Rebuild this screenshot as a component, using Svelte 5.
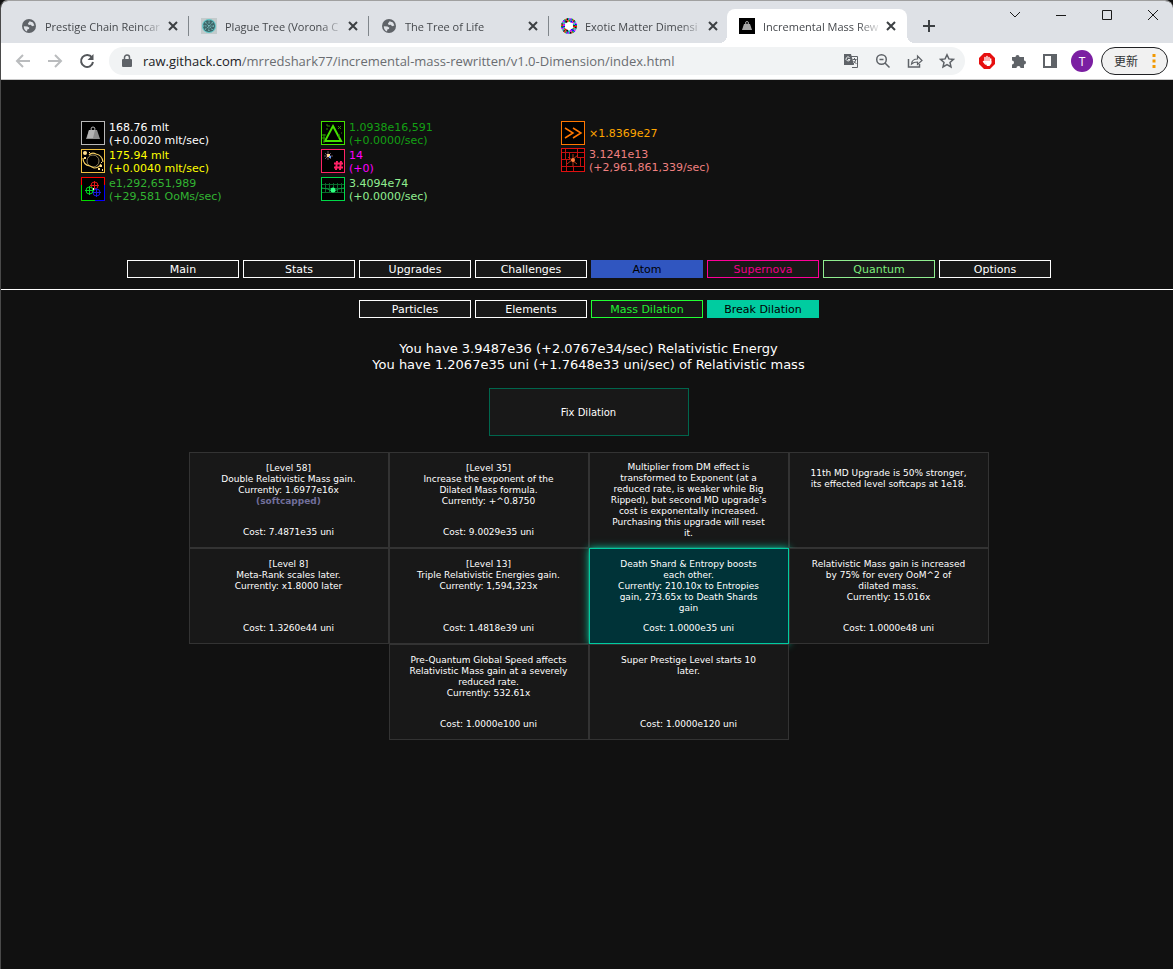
<script lang="ts">
  const tabs = [
    { icon: "globe", title: "Prestige Chain Reincar" },
    { icon: "plague", title: "Plague Tree (Vorona C" },
    { icon: "globe", title: "The Tree of Life" },
    { icon: "exotic", title: "Exotic Matter Dimensi" },
    { icon: "mass", title: "Incremental Mass Rew", active: true },
  ];

  const resources = [
    [
      { icon: "weight", color: "#ffffff", border: "#b8b8b8", amount: "168.76 mlt", rate: "(+0.0020 mlt/sec)" },
      { icon: "hole", color: "#ffff00", border: "#f0c040", amount: "175.94 mlt", rate: "(+0.0040 mlt/sec)" },
      { icon: "quarks", color: "#32b432", border: "#ff0000", amount: "e1,292,651,989", rate: "(+29,581 OoMs/sec)" },
    ],
    [
      { icon: "triangle", color: "#14a014", border: "#44e000", amount: "1.0938e16,591", rate: "(+0.0000/sec)" },
      { icon: "hash", color: "#ff00ff", border: "#ff2266", amount: "14", rate: "(+0)" },
      { icon: "grid", color: "#90ee90", border: "#00d848", amount: "3.4094e74", rate: "(+0.0000/sec)" },
    ],
    [
      { icon: "arrows", color: "#ffa500", border: "#ff7700", amount: "×1.8369e27", rate: "" },
      { icon: "crack", color: "#f08080", border: "#e01010", amount: "3.1241e13", rate: "(+2,961,861,339/sec)" },
    ],
  ];

  const mainTabs = [
    { name: "Main", style: "" },
    { name: "Stats", style: "" },
    { name: "Upgrades", style: "" },
    { name: "Challenges", style: "" },
    { name: "Atom", style: "atom" },
    { name: "Supernova", style: "supernova" },
    { name: "Quantum", style: "quantum" },
    { name: "Options", style: "" },
  ];

  const subTabs = [
    { name: "Particles", style: "" },
    { name: "Elements", style: "" },
    { name: "Mass Dilation", style: "dilation" },
    { name: "Break Dilation", style: "broken" },
  ];

  const upgrades = [
    [
      { level: "[Level 58]", desc: "Double Relativistic Mass gain.", effect: "Currently: 1.6977e16x", softcapped: true, cost: "7.4871e35" },
      { level: "[Level 35]", desc: "Increase the exponent of the Dilated Mass formula.", effect: "Currently: +^0.8750", cost: "9.0029e35" },
      { desc: "Multiplier from DM effect is transformed to Exponent (at a reduced rate, is weaker while Big Ripped), but second MD upgrade's cost is exponentally increased. Purchasing this upgrade will reset it." },
      { desc: "11th MD Upgrade is 50% stronger, its effected level softcaps at 1e18." },
    ],
    [
      { level: "[Level 8]", desc: "Meta-Rank scales later.", effect: "Currently: x1.8000 later", cost: "1.3260e44" },
      { level: "[Level 13]", desc: "Triple Relativistic Energies gain.", effect: "Currently: 1,594,323x", cost: "1.4818e39" },
      { desc: "Death Shard & Entropy boosts each other.", effect: "Currently: 210.10x to Entropies gain, 273.65x to Death Shards gain", cost: "1.0000e35", can: true },
      { desc: "Relativistic Mass gain is increased by 75% for every OoM^2 of dilated mass.", effect: "Currently: 15.016x", cost: "1.0000e48" },
    ],
    [
      { desc: "Pre-Quantum Global Speed affects Relativistic Mass gain at a severely reduced rate.", effect: "Currently: 532.61x", cost: "1.0000e100" },
      { desc: "Super Prestige Level starts 10 later.", cost: "1.0000e120" },
    ],
  ];

  const exoticColors = ["#ff0000", "#00b000", "#0000ff", "#e000e0", "#00b8b8", "#101010"];
</script>

{#snippet favicon(icon)}
  {#if icon === "globe"}
    <svg class="favicon" viewBox="0 0 16 16">
      <circle cx="8" cy="8" r="7" fill="#5f6368" />
      <path d="M8.6 3.2 12 4.4l1.4 3-2.2.9-1.5-1.6-1.9.3-.9-1.6 1-1.1zM2.8 8.2l3.7.2 1.9 1.3-.5 1.4-1.6.4-.3 2C4 12.700 2.700 10.600 2.800 8.200z" fill="#dee1e6" />
    </svg>
  {:else if icon === "plague"}
    <svg class="favicon" viewBox="0 0 16 16">
      <rect width="16" height="16" fill="#c3cbcc" />
      <circle cx="8" cy="8" r="7" fill="#5cc4c5" />
      <circle cx="8" cy="8" r="6" fill="#3e6668" />
      <path d="M8 2v12M2 8h12M4 4l8 8M12 4l-8 8" stroke="#7fc8c8" stroke-dasharray="1 1.500" />
      <circle cx="8" cy="8" r="4" fill="none" stroke="#7fc8c8" stroke-dasharray="1 2" />
    </svg>
  {:else if icon === "exotic"}
    <svg class="favicon" viewBox="0 0 16 16">
      <circle cx="8" cy="8" r="8" fill="#fff" />
      {#each exoticColors as color, i}
        <circle cx="8" cy="8" r="7" fill="none" stroke={color} stroke-width="2" stroke-dasharray="1.220 6.110" stroke-dashoffset={i * 1.22} />
        <circle cx="8" cy="8" r="5" fill="none" stroke={color} stroke-width="2" stroke-dasharray="1.740 8.730" stroke-dashoffset={-i * 1.74} />
      {/each}
      <path d="m8 3 1.400 2.500 3-.5-1.200 2.800 1.600 2.400-3 .3L8 13l-1.800-2.500-3-.3 1.600-2.400L3.600 5l3 .5z" fill="#fff" />
    </svg>
  {:else}
    <svg class="favicon" viewBox="0 0 16 16">
      <rect width="16" height="16" fill="#000" />
      <path d="M5 6h6l2 6H3z" fill="#a8a8a8" />
      <circle cx="8" cy="5" r="1.500" fill="none" stroke="#a8a8a8" />
    </svg>
  {/if}
{/snippet}

{#snippet resourceIcon(icon, border)}
  <svg class="res-icon" viewBox="0 0 24 24" fill="none">
    <rect x="0.5" y="0.5" width="23" height="23" fill="#000" stroke={border} />
    {#if icon === "weight"}
      <path d="M8 9h8l3 9H5z" fill="#8c8c8c" />
      <path d="M8 9h6l-2 8H6z" fill="#b4b4b4" />
      <circle cx="12" cy="8" r="2" stroke="#b4b4b4" />
    {:else if icon === "hole"}
      <circle cx="12" cy="12" r="6" stroke="#8a7d5a" stroke-width="1" />
      <path d="M2 9q0 7 7 8l4 2q5 0 7-4M8 6q3-3 7-1 6 1 7 8" stroke="#f5cf62" stroke-width="1.200" />
      <circle cx="4" cy="4" r="2" fill="#ffe090" />
      <path d="M8 3h1v1H8zM3 8h2v2H3zM19 16h2v2h-2zM17 19h2v2h-2zM21 20h1v2h-1zM20 13h1v1h-1z" fill="#ffe090" />
    {:else if icon === "quarks"}
      <path d="M0.500 8V23.500H14" stroke="#00dc00" />
      <path d="M14 23.500H23.500V8" stroke="#0000ff" />
      <circle cx="13.500" cy="8.500" r="3.500" stroke="#e01818" />
      <path d="M13.500 4v9M9 8.500h9" stroke="#e01818" />
      <circle cx="15.500" cy="15.500" r="3.500" stroke="#1818e0" />
      <path d="M15.500 11v9M11 15.500h9" stroke="#1818e0" />
      <circle cx="8.500" cy="13.500" r="3.500" stroke="#00d820" />
      <path d="M8.500 9v9M4 13.500h9" stroke="#00d820" />
      <path d="M12 11h1v2h-1z" fill="#ffffff" />
    {:else if icon === "triangle"}
      <path d="M12 5 20 20H4z" stroke="#44e000" stroke-width="2" />
      <path d="M1 14h4M1 17h3M3 13v9M18 13v4M6 5h3M5 8h2M17 5l3 3M20 5l-3 3M6 3v2M20 12h1" stroke="#2a9000" />
    {:else if icon === "hash"}
      <path d="M16 12l-1 9M20 12l-1 9M13 14.500h9M13 18.500h9" stroke="#ff2266" stroke-width="2" />
      <path d="M7 2v9M3 7h9M4 4l6 6M10 4l-6 6" stroke="#665060" />
      <path d="M6 5h3v3H6z" fill="#ffd890" />
      <path d="M8 7h2v2H8z" fill="#60a0ff" />
    {:else if icon === "grid"}
      <path d="M1 7.500h22M1 11.500h22M1 15.500h22M4.500 6v10M8.500 6v10M12.500 6v10M16.500 6v10M20.500 6v10" stroke="#0a6a2c" />
      <path d="M1 11q6 0 11 4q5-4 11-4" stroke="#0a9a40" />
      <circle cx="12" cy="13" r="2.500" fill="#30ff80" />
    {:else if icon === "arrows"}
      <path d="M4 7l8 5-8 5M12 7l8 5-8 5" stroke="#ff7700" stroke-width="1.500" />
    {:else}
      <path d="M1 4.500h22M1 11.500h7M16 9.500h7M1 18.500h22M4.500 1v10M8.500 4v8M16.500 1v9M5.500 12v11M12.500 18v5M19.500 10v9" stroke="#c01010" />
      <path d="M12 6v12M6 16l11-9M7 9l9 7" stroke="#b83818" />
      <circle cx="12" cy="12" r="2" fill="#ff8040" />
    {/if}
  </svg>
{/snippet}

<div class="window">
  <header class="tab-strip">
    <div class="tabs">
      {#each tabs as tab}
        <div class="tab" class:active={tab.active}>
          {@render favicon(tab.icon)}
          <span class="tab-title">{tab.title}</span>
          <button class="tab-close" aria-label="Close tab">
            <svg width="10" height="10" viewBox="0 0 10 10"><path d="M1 1l8 8M9 1 1 9" /></svg>
          </button>
        </div>
      {/each}
      <button class="new-tab" aria-label="New tab">
        <svg width="14" height="14" viewBox="0 0 14 14"><path d="M7 1v12M1 7h12" /></svg>
      </button>
    </div>
    <div class="window-controls">
      <button aria-label="Search tabs"><svg width="12" height="12" viewBox="0 0 12 12"><path d="M1 3l5 5 5-5" /></svg></button>
      <button aria-label="Minimize"><svg width="12" height="12" viewBox="0 0 12 12"><path d="M1 6.500h10" /></svg></button>
      <button aria-label="Maximize"><svg width="12" height="12" viewBox="0 0 12 12"><path d="M1.500 1.500h9v9h-9z" /></svg></button>
      <button aria-label="Close"><svg width="12" height="12" viewBox="0 0 12 12"><path d="M1 1l10 10M11 1 1 11" /></svg></button>
    </div>
  </header>

  <div class="toolbar">
    <div class="nav-buttons">
      <button class="disabled" aria-label="Back">
        <svg width="16" height="16" viewBox="0 0 16 16"><path d="M15 8H2M8 2 2 8l6 6" /></svg>
      </button>
      <button class="disabled" aria-label="Forward">
        <svg width="16" height="16" viewBox="0 0 16 16"><path d="M1 8h13M8 2l6 6-6 6" /></svg>
      </button>
      <button aria-label="Reload">
        <svg width="16" height="16" viewBox="0 0 16 16"><path d="M13 4.500A6 6 0 1 0 14 9" /><path d="M14.500 1v6h-6z" class="fill" /></svg>
      </button>
    </div>
    <div class="address">
      <svg width="10" height="14" viewBox="0 0 10 14">
        <rect y="5" width="10" height="8" rx="1" fill="#5f6368" />
        <path d="M2.500 5V3.500a2.500 2.500 0 0 1 5 0V5" fill="none" stroke="#5f6368" stroke-width="1.500" />
      </svg>
      <span class="url"><b>raw.githack.com</b>/mrredshark77/incremental-mass-rewritten/v1.0-Dimension/index.html</span>
      <div class="address-actions">
        <button aria-label="Translate">
          <svg width="16" height="16" viewBox="0 0 16 16">
            <path d="M7 3.500h7.500v11H9" stroke-width="1" />
            <path d="M1 1h7l3 11H1z" class="fill" />
            <path d="M9.500 6.500h4M11.500 5v1.500M13 6.500q-1 3-3 4.500M10.500 8l3 3" stroke-width="1" />
            <path d="M6.500 4.500A2 2 0 1 0 7 6.500H5" stroke="#f1f3f4" stroke-width="1" />
          </svg>
        </button>
        <button aria-label="Zoom">
          <svg width="16" height="16" viewBox="0 0 16 16"><circle cx="6.500" cy="6.500" r="4.800" /><path d="M10 10l4.500 4.500M4.500 6.500h4" /></svg>
        </button>
        <button aria-label="Share">
          <svg width="16" height="16" viewBox="0 0 16 16"><path d="M1.500 6v8h11v-3" /><path d="M4.500 11q.5-5 6-5V3l4.500 4.500-4.500 4V9q-4 0-6 2z" stroke-width="1.200" /></svg>
        </button>
        <button aria-label="Bookmark">
          <svg width="16" height="16" viewBox="0 0 16 16"><path d="m8 1.800 1.900 4.100 4.500.5-3.400 3 1 4.500L8 11.600l-4 2.300 1-4.500-3.400-3 4.500-.5z" /></svg>
        </button>
      </div>
    </div>
    <div class="extensions">
      <button aria-label="Ad blocker">
        <svg width="16" height="16" viewBox="0 0 16 16">
          <path d="M5 0h6l5 5v6l-5 5H5l-5-5V5z" fill="#e60f0f" />
          <path d="M6 9V4.500M8 9V3.500M10 9V4.500M11.700 9.500V6M4.500 8.500 6.500 11" stroke="#fff" stroke-width="1.400" stroke-linecap="round" />
          <path d="M5.300 8h7v2.500L10.500 13H8z" fill="#fff" />
        </svg>
      </button>
      <button aria-label="Extensions">
        <svg width="16" height="16" viewBox="0 0 16 16"><path d="M1 4h3.500a2 2 0 1 1 4 0H13v3.500a2 2 0 1 1 0 4V15H9.500a2 2 0 1 0-4 0H1v-3.500a2 2 0 1 0 0-4z" fill="#5f6368" /></svg>
      </button>
      <button aria-label="Side panel">
        <svg width="14" height="14" viewBox="0 0 14 14"><path d="M0 0h14v14H0zM2 2v10h6V2z" fill="#5f6368" fill-rule="evenodd" /></svg>
      </button>
      <button class="avatar" aria-label="Profile">T</button>
      <button class="update">
        更新
        <svg width="4" height="16" viewBox="0 0 4 16"><path d="M.5 1h3v3h-3zM.5 6.500h3v3h-3zM.5 12h3v3h-3z" fill="#f29900" /></svg>
      </button>
    </div>
  </div>

  <main>
    <section class="resources">
      {#each resources as column}
        <div class="res-column">
          {#each column as res}
            <div class="res" style="color: {res.color}">
              {@render resourceIcon(res.icon, res.border)}
              <div>
                {res.amount}
                {#if res.rate}<br />{res.rate}{/if}
              </div>
            </div>
          {/each}
        </div>
      {/each}
    </section>

    <nav class="tab-row main-tabs">
      {#each mainTabs as tab}
        <button class="game-tab {tab.style}">{tab.name}</button>
      {/each}
    </nav>
    <nav class="tab-row sub-tabs">
      {#each subTabs as tab}
        <button class="game-tab {tab.style}">{tab.name}</button>
      {/each}
    </nav>

    <section class="dilation-tab">
      <p class="summary">
        You have 3.9487e36 (+2.0767e34/sec) Relativistic Energy<br />
        You have 1.2067e35 uni (+1.7648e33 uni/sec) of Relativistic mass
      </p>

      <button class="fix">Fix Dilation</button>

      <div class="upgrades">
        {#each upgrades as row}
          <div class="upgrade-row">
            {#each row as upg}
              <button class="upgrade" class:can={upg.can} class:single={!upg.cost}>
                <span class="desc">
                  {#if upg.level}{upg.level}<br />{/if}
                  {upg.desc}
                  {#if upg.effect}<br />{upg.effect}{/if}
                  {#if upg.softcapped}<br /><span class="soft">(softcapped)</span>{/if}
                </span>
                {#if upg.cost}<span>Cost: {upg.cost} uni</span>{/if}
              </button>
            {/each}
          </div>
        {/each}
      </div>
    </section>
  </main>
</div>

<style>
  :global(body) {
    margin: 0;
    background: #111;
  }

  button {
    font: inherit;
    color: inherit;
    padding: 0;
    border: none;
    background: none;
    cursor: pointer;
  }

  svg {
    display: block;
    flex-shrink: 0;
  }

  .window {
    min-height: 100vh;
    box-sizing: border-box;
    display: flex;
    flex-direction: column;
    background: #111;
    border-left: 1px solid #4a4a4a;
    border-top: 1px solid #a0a0a0;
    border-radius: 8px 8px 0 0;
    overflow: hidden;
  }

  .tab-strip {
    display: flex;
    justify-content: space-between;
    height: 42px;
    background: #dee1e6;
    font: 11px "Open Sans", "Noto Sans", sans-serif;
    color: #45484c;
  }

  .tabs {
    display: flex;
    align-items: flex-end;
    padding-left: 8px;
  }

  .tab {
    display: flex;
    align-items: center;
    box-sizing: border-box;
    width: 180px;
    height: 34px;
    padding: 0 11px 0 12px;
    position: relative;
  }

  .tab:nth-child(-n + 3)::after {
    content: "";
    position: absolute;
    right: 0;
    top: 7px;
    width: 1px;
    height: 20px;
    background: #80868b;
  }

  .tab.active {
    background: #fff;
    border-radius: 8px 8px 0 0;
    margin-left: -2px;
  }

  .tab.active::before,
  .tab.active::after {
    content: "";
    position: absolute;
    bottom: 0;
    width: 8px;
    height: 8px;
  }

  .tab.active::before {
    left: -8px;
    background: radial-gradient(circle at 0 0, transparent 8px, #fff 8px);
  }

  .tab.active::after {
    right: -8px;
    background: radial-gradient(circle at 100% 0, transparent 8px, #fff 8px);
  }

  .favicon {
    width: 16px;
    height: 16px;
  }

  .tab-title {
    flex: 1;
    margin: 0 4px 0 8px;
    overflow: hidden;
    white-space: nowrap;
    mask-image: linear-gradient(to right, #000 calc(100% - 24px), transparent);
  }

  .tab-close svg,
  .new-tab svg {
    fill: none;
    stroke: #3c4043;
    stroke-width: 2;
  }

  .new-tab {
    padding: 10px 15px;
  }

  .window-controls {
    display: flex;
    align-items: flex-start;
    gap: 34px;
    padding: 8px 14px;
  }

  .window-controls svg {
    fill: none;
    stroke: #1a1a1a;
  }

  .toolbar {
    display: flex;
    align-items: center;
    height: 36px;
    padding: 0 5px 0 14px;
    background: #fff;
    border-bottom: 1px solid #c8c8c8;
    font: 13px "Open Sans", "Noto Sans", "Noto Sans CJK SC", sans-serif;
  }

  .nav-buttons {
    display: flex;
    gap: 16px;
    margin-right: 14px;
  }

  .nav-buttons svg {
    fill: none;
    stroke: #54575b;
    stroke-width: 2;
  }

  .nav-buttons .disabled svg {
    stroke: #babcbe;
  }

  .nav-buttons .fill {
    fill: #54575b;
    stroke: none;
  }

  .address {
    flex: 1;
    display: flex;
    align-items: center;
    height: 28px;
    min-width: 0;
    padding: 0 10px 0 13px;
    margin-right: 14px;
    border-radius: 14px;
    background: #f1f3f4;
  }

  .url {
    flex: 1;
    margin-left: 11px;
    overflow: hidden;
    white-space: nowrap;
    color: #6a6d71;
  }

  .url b {
    font-weight: 400;
    color: #202124;
  }

  .address-actions {
    display: flex;
    gap: 16px;
  }

  .address-actions svg {
    fill: none;
    stroke: #5f6368;
    stroke-width: 1.5;
  }

  .address-actions .fill {
    fill: #5f6368;
    stroke: none;
  }

  .extensions {
    display: flex;
    align-items: center;
    gap: 16px;
  }

  .extensions svg {
    fill: none;
  }

  .avatar {
    width: 22px;
    height: 22px;
    margin: 0 -8px 0 -2px;
    border-radius: 50%;
    background: #7b1fa2;
    color: #fff;
    font-size: 12px;
  }

  .update {
    display: flex;
    align-items: center;
    gap: 14px;
    box-sizing: border-box;
    height: 28px;
    padding: 0 11px 0 12px;
    border: 1px solid #202124;
    border-radius: 14px;
    background: #f1f1f1;
    color: #303134;
    font-size: 12px;
  }

  main {
    flex: 1;
    color: #fff;
    font-family: Verdana, "DejaVu Sans", sans-serif;
    text-align: center;
  }

  .resources {
    display: flex;
    box-sizing: border-box;
    height: 180px;
    padding: 39px 80px 0;
    font-size: 11px;
    line-height: 13px;
    text-align: left;
  }

  .res-column {
    display: flex;
    flex-direction: column;
    width: 240px;
  }

  .res {
    display: flex;
    align-items: center;
    gap: 4px;
    min-height: 27px;
    white-space: nowrap;
  }

  .res div {
    padding-top: 2px;
  }

  .res-icon {
    width: 24px;
    height: 24px;
  }

  .tab-row {
    display: flex;
    justify-content: center;
    gap: 4px;
    padding-left: 4px;
  }

  .main-tabs {
    padding-bottom: 11px;
    border-bottom: 1px solid #fff;
  }

  .sub-tabs {
    padding-top: 10px;
  }

  .game-tab {
    box-sizing: border-box;
    width: 112px;
    height: 18px;
    padding-top: 1px;
    border: 1px solid #fff;
    background: #181818;
    font-size: 11px;
    line-height: 16px;
  }

  .atom {
    border-color: #3056c0;
    background: #3056c0;
    color: #000;
  }

  .supernova {
    border-color: #ff0099;
    color: #ee0088;
  }

  .quantum {
    border-color: #90ee90;
    color: #7cec7c;
  }

  .dilation {
    border-color: #22ff33;
    color: #22ee33;
  }

  .broken {
    border-color: #00cca0;
    background: #00cca0;
    color: #000;
  }

  .dilation-tab {
    padding-left: 3px;
  }

  .summary {
    margin: 23px 0 15px;
    font-size: 13px;
    line-height: 16px;
  }

  .fix {
    box-sizing: border-box;
    width: 200px;
    height: 48px;
    border: 1px solid #00664d;
    background: #181818;
    font-size: 10px;
  }

  .upgrades {
    margin-top: 16px;
  }

  .upgrade-row {
    display: flex;
    justify-content: center;
  }

  .upgrade {
    display: flex;
    flex-direction: column;
    align-items: center;
    justify-content: space-between;
    box-sizing: border-box;
    width: 200px;
    min-height: 96px;
    padding: 10px 20px 9px;
    border: 1px solid #333;
    background: #181818;
    font-size: 9px;
    line-height: 11px;
  }

  /* one-time upgrades that are already bought have no cost line */
  .upgrade.single {
    justify-content: center;
    padding: 8px 20px;
  }

  .single .desc {
    min-height: 64px;
  }

  .upgrade.can {
    border-color: #00cca0;
    background: #003338;
    box-shadow: 0 0 8px #00cca0;
  }

  .soft {
    color: #716f9b;
    font-size: 9px;
    font-weight: 700;
  }
</style>
